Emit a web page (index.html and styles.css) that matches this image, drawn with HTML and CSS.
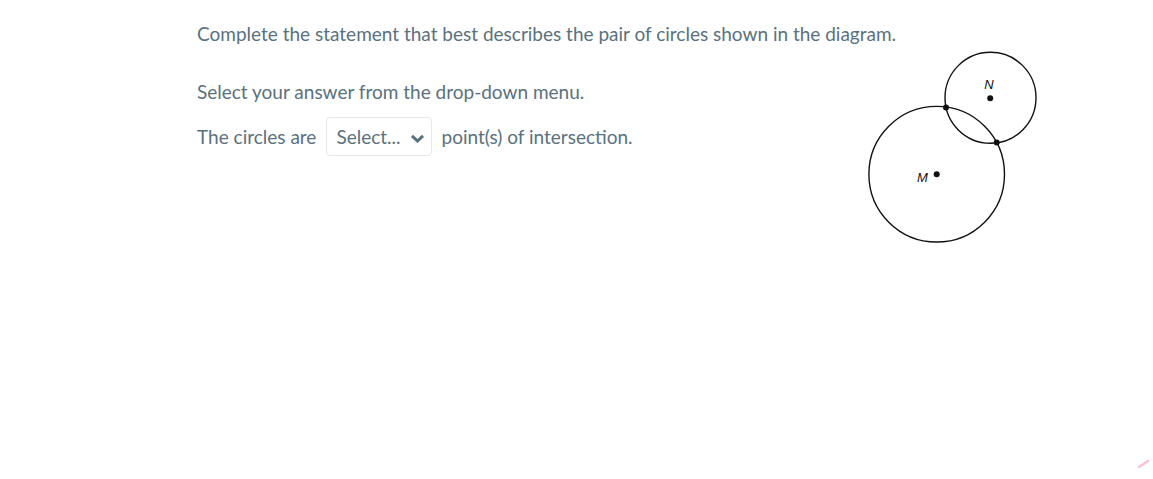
FILE: index.html
```html
<!DOCTYPE html>
<html lang="en">

<head>
    <meta charset="UTF-8">
    <meta name="viewport" content="width=device-width, initial-scale=1.0">
    <title>Circles</title>
    <link rel="stylesheet" href="styles.css">
</head>

<body>

    <div class="question">
        <p class="prompt">Complete the statement that best describes the pair of circles shown in the diagram.</p>
        <div class="row">
            <div class="answer">
                <p class="hint">Select your answer from the drop-down menu.</p>
                <p class="line">The circles are
                    <span class="select">Select...
                        <svg class="chev" width="15" height="9" viewBox="0 0 15 9">
                            <path d="M2 1.8 L7.5 7 L13 1.8" fill="none" stroke="#56707d" stroke-width="3" />
                        </svg>
                    </span>
                    point(s) of intersection.
                </p>
            </div>
            <!-- diagram -->
            <svg class="figure" width="180" height="200" viewBox="865 48 180 200">
                <circle cx="936.7" cy="174.2" r="67.8" fill="none" stroke="#111" stroke-width="1.4" />
                <circle cx="990.5" cy="97.8" r="45.5" fill="none" stroke="#111" stroke-width="1.4" />
                <circle cx="936.7" cy="174.3" r="3" fill="#111" />
                <circle cx="990.2" cy="98.3" r="3" fill="#111" />
                <circle cx="946" cy="107.4" r="3" fill="#111" />
                <circle cx="996.7" cy="142.6" r="3" fill="#111" />
                <text x="922.5" y="181.5" class="lbl" text-anchor="middle">M</text>
                <text x="989" y="89" class="lbl" text-anchor="middle">N</text>
            </svg>
        </div>
    </div>

    <svg class="mark" width="14" height="10" viewBox="0 0 14 10">
        <path d="M2 8 L11 2" stroke="#f7c4cf" stroke-width="2.5" stroke-linecap="round" />
    </svg>

</body>

</html>
```

FILE: styles.css
```css
body {
    margin: 0;
    padding: 0;
    background: #ffffff;
    font-family: 'Lato', sans-serif;
    color: #5a717e;
    font-size: 19px;
}

.question {
    width: 850px;
    margin-left: 197px;
    padding-top: 21px;
}

.prompt {
    margin: 0;
    line-height: 26px;
}

.row {
    display: flex;
    justify-content: space-between;
    align-items: flex-start;
    margin-top: 1px;
}

.answer {
    padding-top: 31px;
}

.hint {
    margin: 0;
    line-height: 26px;
}

.line {
    margin: 12px 0 0 0;
    display: flex;
    align-items: center;
    gap: 10px;
    line-height: 26px;
}

.select {
    box-sizing: border-box;
    display: inline-flex;
    align-items: center;
    gap: 9px;
    height: 39px;
    padding: 0 6px 0 9px;
    border: 1px solid #e6e8ea;
    border-radius: 4px;
    color: #5a717e;
}

.chev {
    display: block;
    margin-top: 4px;
}

.figure {
    display: block;
    margin-right: 2px;
}

.lbl {
    font-family: 'Liberation Sans', sans-serif;
    font-style: italic;
    font-size: 13px;
    fill: #111;
}

.mark {
    position: absolute;
    left: 1137px;
    top: 459px;
}
```
